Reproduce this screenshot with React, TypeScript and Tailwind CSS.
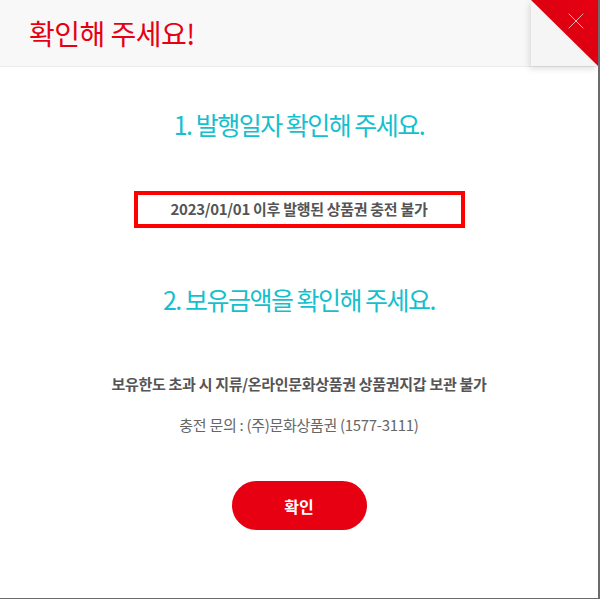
import { X } from "lucide-react"

const font = { fontFamily: '"Noto Sans CJK KR", "Noto Sans", sans-serif' }

export default function App() {
  return (
    <div
      className="w-[600px] h-[599px] bg-white border-r-2 border-b border-[#6b6b6b] flex flex-col overflow-hidden"
      style={font}
    >
      {/* header */}
      <div className="relative h-[67px] shrink-0 bg-[#f8f8f8] border-b border-[#ebebeb] flex items-center pl-[29px]">
        <h1 className="text-[28px] leading-none text-[#e60012] tracking-[-0.5px] pb-[1px]">확인해 주세요!</h1>
        <button className="absolute right-0 top-0 w-[67px] h-[66px] bg-[#f5f5f5] shadow-[-2px_3px_6px_rgba(0,0,0,0.12)] overflow-hidden">
          <span className="absolute inset-0 bg-gradient-to-bl from-[#e60012] to-[#d4000f] [clip-path:polygon(0_0,100%_0,100%_100%)]" />
          <X className="absolute left-[31px] top-[7px] w-[28px] h-[28px] text-white/75" strokeWidth={0.8} />
        </button>
      </div>

      {/* body */}
      <div className="flex-1 flex flex-col items-center">
        <h2 className="mt-[45px] text-[25px] leading-none text-[#14c0cd] tracking-[-1.5px]">
          1. 발행일자 확인해 주세요.
        </h2>
        <div className="mt-[54px] w-[331px] h-[37px] border-[4px] border-[#ff0000] flex items-center justify-center">
          <span className="text-[15px] font-bold text-[#555] tracking-[-0.3px]">
            2023/01/01 이후 발행된 상품권 충전 불가
          </span>
        </div>
        <h2 className="mt-[59px] text-[25px] leading-none text-[#14c0cd] tracking-[-1.5px]">
          2. 보유금액을 확인해 주세요.
        </h2>
        <p className="mt-[61px] text-[15px] font-bold text-[#555] tracking-[-0.3px]">
          보유한도 초과 시 지류/온라인문화상품권 상품권지갑 보관 불가
        </p>
        <p className="mt-[18px] text-[15px] text-[#666] tracking-[-0.3px]">
          충전 문의 : (주)문화상품권 (1577-3111)
        </p>
        <button className="mt-[45px] w-[135px] h-[49px] rounded-full bg-[#e60012] text-white text-[16px] font-bold">
          확인
        </button>
      </div>
    </div>
  )
}
